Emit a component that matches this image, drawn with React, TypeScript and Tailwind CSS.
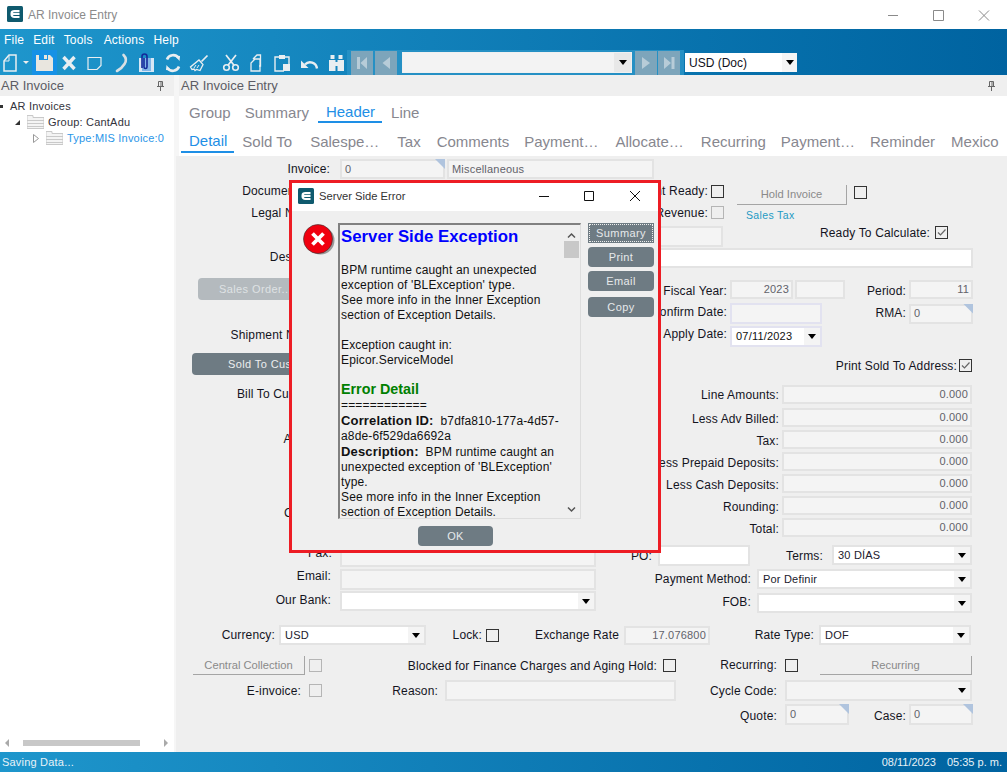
import React from "react";

type P = { c?: string; children?: React.ReactNode };

const L = ({ c = "", children }: P) => (
  <div className={`flex shrink-0 justify-end whitespace-nowrap text-[12px] leading-[14px] tracking-[0.15px] text-[#14141e] ${c}`}>{children}</div>
);

const Corner = () => (
  <div className="absolute right-[-2px] top-[-2px] h-[10px] w-[10px] bg-[#b0c4de] [clip-path:polygon(0_0,100%_0,100%_100%)]" />
);

const F = ({ c = "", t, right, corner, white }: { c?: string; t?: string; right?: boolean; corner?: boolean; white?: boolean }) => (
  <div
    className={`relative flex shrink-0 items-center border-2 border-[#e3e3e3] text-[11px] tracking-[0.2px] text-[#62626a] ${white ? "bg-white" : "bg-[#f4f4f4]"} ${right ? "justify-end pr-[2px]" : "pl-[3px]"} ${c}`}
  >
    {t}
    {corner && <Corner />}
  </div>
);

const Caret = () => <div className="h-0 w-0 border-x-[4px] border-t-[5px] border-x-transparent border-t-black" />;

const Combo = ({ c = "", t, dis }: { c?: string; t?: string; dis?: boolean }) => (
  <div className={`flex shrink-0 border-2 border-[#e3e3e3] text-[11px] tracking-[0.2px] text-[#20202c] ${dis ? "bg-[#f4f4f4]" : "bg-white"} ${c}`}>
    <div className="flex flex-1 items-center pl-[4px]">{t}</div>
    <div className="flex w-[16px] items-center justify-center bg-[#f4f4f4]">
      <Caret />
    </div>
  </div>
);

const Chk = ({ dis, on, c = "" }: { dis?: boolean; on?: boolean; c?: string }) => (
  <div className={`flex h-[13px] w-[13px] shrink-0 items-center justify-center border ${dis ? "border-[#b5b5b5]" : "border-[#333]"} ${c}`}>
    {on && (
      <svg width="11" height="11" viewBox="0 0 11 11" fill="none">
        <path d="M2 5.500l2.500 2.500L9.500 2.500" stroke="#666" strokeWidth="1.2" />
      </svg>
    )}
  </div>
);

const FlatBtn = ({ c = "", t }: { c?: string; t: string }) => (
  <div className={`flex shrink-0 items-center justify-center border-b border-r border-[#a5a5a5] text-[11.2px] text-[#8a8a8a] ${c}`}>{t}</div>
);

const Logo = ({ c = "" }: { c?: string }) => (
  <svg className={c} viewBox="0 0 16 16">
    <rect width="16" height="16" rx="1.500" fill="#0f5a6e" />
    <path d="M3.500 7.400C3.500 5 5 4 7.500 4H12.500V6.200H7.500C6.400 6.200 6 6.500 5.900 7H12.500V9.100H5.900C6 9.700 6.500 10 7.500 10H12.500V12H7.500C5 12 3.500 10.800 3.500 8.500Z" fill="#fff" />
  </svg>
);

const Pin = ({ c = "" }: { c?: string }) => (
  <svg className={c} width="9" height="10" viewBox="0 0 9 10" fill="none">
    <path d="M2.500 .5h4v5h-4zM1 5.500h7M4.500 5.500V10" stroke="#666" />
    <path d="M5 1v4" stroke="#666" />
  </svg>
);

const Ico = ({ c = "", children, w = 20 }: P & { w?: number }) => (
  <svg className={`shrink-0 ${c}`} width={w} height="20" viewBox={`0 0 ${w} 20`} fill="none" stroke="#e9eef1" strokeWidth="1.5">
    {children}
  </svg>
);

const Folder = ({ c = "" }: { c?: string }) => (
  <svg className={`shrink-0 ${c}`} width="17" height="14" viewBox="0 0 17 14">
    <path d="M0 0.500h6v2h11v11H0z" fill="#f4f4f4" stroke="#c9c9c9" />
    <path d="M0 5.500h17M0 8.500h17M0 11.500h17" stroke="#c9c9c9" />
  </svg>
);

const Tab = ({ c = "", t, on }: { c?: string; t: string; on?: boolean }) => (
  <div className={`relative shrink-0 whitespace-nowrap text-[15px] leading-[18px] ${on ? "text-[#1e8fe6]" : "text-[#87878f]"} ${c}`}>{t}</div>
);

const MBtn = ({ c = "", t, focus }: { c?: string; t: string; focus?: boolean }) => (
  <div className={`flex h-[20px] w-[66px] items-center justify-center bg-[#6e7b83] text-[11px] tracking-[0.4px] text-[#e6e9eb] ${focus ? "border-2 border-[#6e7b83] outline-1 outline-dotted -outline-offset-2 outline-[#eee]" : "rounded-[4px]"} ${c}`}>{t}</div>
);

const NavBtn = ({ c = "", d }: { c?: string; d: string }) => (
  <div className={`flex h-[24px] w-[22px] shrink-0 items-center justify-center bg-[#7da5bb] ${c}`}>
    <svg width="14" height="16" viewBox="0 0 14 16">
      <path d={d} fill="#b7ccd8" />
    </svg>
  </div>
);

export default function App() {
  return (
    <div className="relative flex h-[772px] w-[1007px] flex-col overflow-hidden bg-white font-['Liberation_Sans',Arial,sans-serif]">
      {/* Title bar */}
      <div className="flex h-[29px] shrink-0 items-center">
        <Logo c="ml-[7px] mt-[-1px] h-[16px] w-[16px]" />
        <div className="ml-[5px] text-[12px] text-[#8b8b8b]">AR Invoice Entry</div>
        <svg className="ml-auto mr-[17px]" width="102" height="12" viewBox="0 0 102 12" fill="none" stroke="#8a8a8a">
          <path d="M0 6.500h10M45.500 1.500h10v10h-10zM91 1.500l10 10M101 1.500l-10 10" />
        </svg>
      </div>

      {/* Menu and toolbar */}
      <div className="h-[46px] shrink-0 bg-gradient-to-r from-[#1e96cc] to-[#0063a0]">
        <div className="flex h-[21px] items-center pl-[4px] text-[12px] tracking-[0.2px] text-white">
          <span>File</span>
          <span className="ml-[9px]">Edit</span>
          <span className="ml-[9px]">Tools</span>
          <span className="ml-[11px]">Actions</span>
          <span className="ml-[9px]">Help</span>
        </div>
        <div className="flex h-[25px] items-center">
          <Ico c="ml-[3px]" w={14}>
            <path d="M1 8l5-6h7v16H1z" />
            <path d="M1 8h5V2" strokeWidth="1" />
          </Ico>
          <div className="ml-[6px] h-0 w-0 border-x-[3px] border-t-[3px] border-x-transparent border-t-[#eee]" />
          <div className="ml-[3px] flex h-[26px] w-[25px] items-center justify-center bg-[#1691e6]">
            <svg width="19" height="18" viewBox="0 0 19 18">
              <path d="M1 1h3v5h9V1h2l3 3v13H1z" fill="#e9e6df" />
              <rect x="9" y="1" width="3" height="4" fill="#e9e6df" />
            </svg>
          </div>
          <Ico c="ml-[4px]" w={16}>
            <path d="M2.500 4l11 12M13.500 4l-11 12" strokeWidth="3.400" />
          </Ico>
          <Ico c="ml-[7px]" w={20}>
            <path d="M4 4.500h13v8l-4 4H4z" strokeWidth="1.200" />
          </Ico>
          <Ico c="ml-[7px]" w={20}>
            <path d="M12.500 2c2.500 2.500 3 6 1 9-1.500 2.500-4 5-7.500 7" strokeWidth="2.600" strokeLinecap="round" stroke="#d8dfe3" />
          </Ico>
          <svg className="ml-[7px] shrink-0" width="17" height="21" viewBox="0 0 17 21" fill="none">
            <rect x="1" y="6" width="15" height="14" fill="#d7e7f5" />
            <rect x="4" y="6" width="9" height="13" fill="#2c86d9" opacity=".5" />
            <path d="M4 16V4.500a2.500 2.500 0 015 0V15a1.500 1.500 0 01-3 0V6" stroke="#142a9a" strokeWidth="1.600" />
          </svg>
          <Ico c="ml-[8px]" w={20}>
            <path d="M15.500 5A6.500 6.500 0 004 6.500M4.500 15a6.500 6.500 0 0011.500-1.500" strokeWidth="2.600" />
            <path d="M12 2.500l5 .5-.5 5zM8 17.500l-5-.5.5-5z" fill="#e9eef1" stroke="none" />
          </Ico>
          <Ico c="ml-[6px]" w={20}>
            <path d="M18.500 2.500l-6 6" strokeWidth="1.700" />
            <path d="M10 7l4 4.500-3 6-3.500-1-1.500 1-1-1.500-2 .5-1.500-2.500z" strokeWidth="1.300" />
            <path d="M7 12l-2 3M10 12l-2 3" strokeWidth="1" />
          </Ico>
          <Ico c="ml-[13px]" w={18}>
            <circle cx="4.500" cy="14.500" r="2.800" strokeWidth="1.600" />
            <circle cx="13.500" cy="14.500" r="2.800" strokeWidth="1.600" />
            <path d="M6 12.200L14 2M12 12.200L4 2" strokeWidth="1.700" />
          </Ico>
          <Ico c="ml-[6px]" w={20}>
            <path d="M7 6l4-4h3.500v11H13M5 18V10l4-4h5v12z" strokeWidth="1.300" />
          </Ico>
          <Ico c="ml-[6px]" w={20}>
            <path d="M12 18H3V4h4M13 4h4v7" strokeWidth="1.400" />
            <rect x="7" y="2" width="6" height="4" fill="#e9eef1" stroke="none" />
            <rect x="11" y="11" width="7" height="7" fill="#e9eef1" stroke="none" />
          </Ico>
          <Ico c="ml-[7px]" w={20}>
            <path d="M18 15.500a7 7 0 00-12-4" strokeWidth="2.400" />
            <path d="M2 7.500V15h7.500z" fill="#e9eef1" stroke="none" />
          </Ico>
          <svg className="ml-[9px] shrink-0" width="17" height="18" viewBox="0 0 17 18">
            <path d="M2.500 1h4v4h-4zM10.500 1h4v4h-4zM1 6h6.500v11H1zM9.500 6H16v11H9.500zM7.500 8h2v4h-2z" fill="#e9eef1" />
          </svg>
          <div className="ml-[2px] flex h-[25px] flex-1 items-center">
            <div className="flex h-[25px] items-center bg-[#2590c4] pl-[4px] pr-[4px]">
              <NavBtn d="M2 2h3v12H2zM12 2v12L5.500 8z" />
              <NavBtn c="ml-[2px]" d="M11 2v12L3.500 8z" />
              <div className="ml-[5px] flex h-[21px] w-[230px] border border-[#f0f0f0] bg-[#f3f3f3]">
                <div className="flex-1" />
                <div className="flex w-[17px] items-center justify-center bg-[#e8e8e8]">
                  <Caret />
                </div>
              </div>
              <NavBtn c="ml-[3px]" d="M3 2v12L11 8z" />
              <NavBtn c="ml-[1px]" d="M2 2v12L9 8zM9.500 2h3v12h-3z" />
            </div>
            <div className="ml-[1px] flex h-[19px] w-[112px] bg-white text-[12px] text-[#101020]">
              <div className="flex flex-1 items-center pl-[4px]">USD (Doc)</div>
              <div className="flex w-[15px] items-center justify-center bg-[#f5f5f5]">
                <Caret />
              </div>
            </div>
          </div>
        </div>
      </div>

      {/* Main */}
      <div className="flex min-h-0 flex-1">
        {/* Tree panel */}
        <div className="flex w-[174px] shrink-0 flex-col">
          <div className="flex h-[21px] shrink-0 items-center bg-[#efefef] pl-[1px] text-[13px] text-[#5c5c64]">
            AR Invoice
            <Pin c="ml-auto mr-[9px]" />
          </div>
          <div className="flex-1 text-[11px] tracking-[0.2px] text-[#33333c]">
            <div className="mt-[2px] flex h-[16px] items-center">
              <div className="h-[3px] w-[3px] bg-[#333]" />
              <span className="ml-[7px]">AR Invoices</span>
            </div>
            <div className="flex h-[16px] items-center">
              <div className="ml-[15px] h-0 w-0 border-b-[5px] border-l-[5px] border-b-[#333] border-l-transparent" />
              <Folder c="ml-[7px]" />
              <span className="ml-[4px]">Group: CantAdu</span>
            </div>
            <div className="flex h-[16px] items-center">
              <svg className="ml-[33px] shrink-0" width="6" height="9" viewBox="0 0 6 9">
                <path d="M.5.5l5 4-5 4z" fill="#fff" stroke="#999" />
              </svg>
              <Folder c="ml-[7px]" />
              <span className="ml-[4px] text-[#2a96e8]">Type:MIS Invoice:0</span>
            </div>
          </div>
          <div className="flex h-[18px] shrink-0 items-center pl-[5px]">
            <div className="h-0 w-0 border-y-[4px] border-r-[4px] border-y-transparent border-r-[#aaa]" />
            <div className="ml-[14px] h-[6px] w-[117px] bg-[#c8c8c8]" />
            <div className="ml-[24px] h-0 w-0 border-y-[4px] border-l-[4px] border-y-transparent border-l-[#aaa]" />
          </div>
        </div>
        <div className="w-[5px] shrink-0 bg-[#f6f6f6]" />

        {/* Right panel */}
        <div className="flex min-w-0 flex-1 flex-col">
          <div className="flex h-[21px] shrink-0 items-center bg-[#efefef] pl-[2px] text-[13px] text-[#5c5c64]">
            AR Invoice Entry
            <Pin c="ml-auto mr-[11px]" />
          </div>
          <div className="h-[60px] shrink-0 bg-white">
            <div className="flex h-[29px] items-end pb-[3px] pl-[10px]">
              <Tab t="Group" />
              <Tab c="ml-[14px]" t="Summary" />
              <Tab c="ml-[17px] top-[-1px] after:absolute after:-left-[8px] after:-right-[7px] after:top-[18px] after:h-[2px] after:bg-[#1e8fe6]" t="Header" on />
              <Tab c="ml-[16px]" t="Line" />
            </div>
            <div className="flex h-[31px] items-start pt-[8px] pl-[10px]">
              <Tab c="top-[-1px] after:absolute after:-left-[8px] after:-right-[7px] after:top-[19px] after:h-[2px] after:bg-[#1e8fe6]" t="Detail" on />
              <Tab c="ml-[15px]" t="Sold To" />
              <Tab c="ml-[18px]" t="Salespe…" />
              <Tab c="ml-[18px]" t="Tax" />
              <Tab c="ml-[16px]" t="Comments" />
              <Tab c="ml-[15px]" t="Payment…" />
              <Tab c="ml-[17px]" t="Allocate…" />
              <Tab c="ml-[17px]" t="Recurring" />
              <Tab c="ml-[15px]" t="Payment…" />
              <Tab c="ml-[15px]" t="Reminder" />
              <Tab c="ml-[16px]" t="Mexico" />
            </div>
          </div>

          {/* Form */}
          <div className="ml-[-3px] flex-1 bg-[#efefef] pt-[3px]">
            <div className="flex h-[386px]">
              <div className="w-[480px] shrink-0">
                <div className="flex h-[20px] items-center">
                  <L c="w-[154px]">Invoice:</L>
                  <F c="ml-[10px] h-[20px] w-[105px]" t="0" corner />
                  <F c="ml-[2px] h-[20px] w-[207px]" t="Miscellaneous" />
                </div>
                <div className="mt-[2px] flex h-[20px] items-center">
                  <L c="w-[155px]">Document Date:</L>
                </div>
                <div className="mt-[2px] flex h-[20px] items-center">
                  <L c="w-[156px]">Legal Number:</L>
                </div>
                <div className="mt-[24px] flex h-[20px] items-center">
                  <L c="w-[159px]">Description:</L>
                </div>
                <div className="ml-[22px] mt-[11px] flex h-[22px] w-[120px] items-center rounded-[4px] bg-[#b4babe] pl-[21px] text-[11px] tracking-[0.4px] text-[#dfe2e4]">
                  Sales Order...
                </div>
                <div className="mt-[25px] flex h-[20px] items-center">
                  <L c="w-[157px]">Shipment Number:</L>
                </div>
                <div className="ml-[16px] mt-[8px] flex h-[22px] w-[150px] items-center rounded-[4px] bg-[#6e7b83] pl-[36px] text-[11px] tracking-[0.4px] text-[#eceeef]">
                  Sold To Customer
                </div>
                <div className="mt-[9px] flex h-[20px] items-center">
                  <L c="w-[154px]">Bill To Customer:</L>
                </div>
                <div className="mt-[25px] flex h-[20px] items-center">
                  <L c="w-[156px]">Address:</L>
                </div>
                <div className="mt-[54px] flex h-[20px] items-center">
                  <L c="w-[154px]">Contact:</L>
                </div>
              </div>

              <div className="flex-1">
                <div className="mt-[26px] flex h-[20px] items-center">
                  <L c="w-[52px] mt-[-8px]">Print Ready:</L>
                  <Chk c="ml-[3px] mt-[-7px]" />
                  <FlatBtn c="ml-[13px] h-[20px] w-[110px] pb-[1px]" t="Hold Invoice" />
                  <Chk c="ml-[7px] mt-[-6px]" />
                </div>
                <div className="flex h-[20px] items-center">
                  <L c="w-[52px] mt-[-4px]">Deferred Revenue:</L>
                  <Chk dis c="ml-[3px] mt-[-6px]" />
                  <div className="ml-[22px] mt-[1px] text-[10.5px] tracking-[0.35px] text-[#1d9ac4]">Sales Tax</div>
                </div>
                <div className="mt-[1px] flex h-[21px] items-start">
                  <F c="h-[21px] w-[67px]" />
                  <L c="w-[207px]">Ready To Calculate:</L>
                  <Chk on c="ml-[5px]" />
                </div>
                <F white c="mt-[1px] h-[20px] w-[317px]" />
                <div className="mt-[12px] flex h-[20px] items-start">
                  <L c="w-[71px] mt-[4px]">Fiscal Year:</L>
                  <F c="ml-[3px] h-[19px] w-[63px]" t="2023" right />
                  <F c="ml-[2px] h-[19px] w-[50px]" />
                  <L c="w-[61px] mt-[4px]">Period:</L>
                  <F c="ml-[3px] h-[19px] w-[64px]" t="11" right />
                </div>
                <div className="mt-[3px] flex h-[21px] items-center">
                  <L c="w-[71px] mt-[-4px]">Confirm Date:</L>
                  <F c="ml-[3px] h-[21px] w-[92px] !border-[#e2e2f0]" />
                  <L c="w-[84px] mt-[-2px]">RMA:</L>
                  <F c="ml-[3px] h-[20px] w-[64px]" t="0" corner />
                </div>
                <div className="mt-[2px] flex h-[21px] items-center">
                  <L c="w-[71px] mt-[-6px]">Apply Date:</L>
                  <Combo c="ml-[3px] h-[21px] w-[92px] !border-[#e2e2f0] !text-[#111]" t="07/11/2023" />
                </div>
                <div className="mt-[12px] flex h-[13px] items-center">
                  <L c="w-[301px]">Print Sold To Address:</L>
                  <Chk on c="ml-[2px]" />
                </div>
                {[
                  ["Line Amounts:", "mt-[13px]", ""],
                  ["Less Adv Billed:", "mt-[4px]", "mt-[2px]"],
                  ["Tax:", "mt-[3px]", "mt-[3px]"],
                  ["Less Prepaid Deposits:", "mt-[3px]", "mt-[2px]"],
                  ["Less Cash Deposits:", "mt-[3px]", "mt-[2px]"],
                  ["Rounding:", "mt-[3px]", "mt-[3px]"],
                  ["Total:", "mt-[3px]", "mt-[2px]"],
                ].map(([t, m, lm]) => (
                  <div key={t} className={`flex h-[19px] items-center ${m}`}>
                    <L c={`w-[123px] ${lm}`}>{t}</L>
                    <F c="ml-[3px] h-[19px] w-[190px]" t="0.000" right />
                  </div>
                ))}
              </div>
            </div>

            <div className="flex h-[22px] items-start">
              <L c="w-[156px] mt-[1px]">Fax:</L>
              <F c="ml-[8px] h-[22px] w-[256px]" />
              <L c="w-[56px] mt-[4px]">PO:</L>
              <F white c="ml-[6px] h-[21px] w-[92px]" />
              <L c="w-[73px] mt-[4px]">Terms:</L>
              <Combo c="ml-[9px] h-[20px] w-[140px]" t="30 DÍAS" />
            </div>
            <div className="mt-[2px] flex h-[21px] items-start">
              <L c="w-[155px]">Email:</L>
              <F c="ml-[9px] h-[21px] w-[256px]" />
              <L c="w-[155px] mt-[3px]">Payment Method:</L>
              <Combo c="ml-[6px] h-[20px] w-[215px]" t="Por Definir" />
            </div>
            <div className="mt-[1px] flex h-[22px] items-start">
              <L c="w-[155px] mt-[2px]">Our Bank:</L>
              <Combo c="ml-[9px] h-[20px] w-[256px]" />
              <L c="w-[155px] mt-[4px]">FOB:</L>
              <Combo c="ml-[6px] mt-[2px] h-[20px] w-[215px]" />
            </div>

            <div className="mt-[12px] flex h-[20px] items-center">
              <L c="w-[99px]">Currency:</L>
              <Combo c="ml-[4px] h-[20px] w-[147px]" t="USD" />
              <L c="w-[56px]">Lock:</L>
              <Chk c="ml-[4px]" />
              <L c="w-[120px]">Exchange Rate</L>
              <F c="ml-[5px] h-[19px] w-[86px]" t="17.076800" right />
              <L c="w-[104px]">Rate Type:</L>
              <Combo c="ml-[5px] h-[20px] w-[152px]" t="DOF" />
            </div>
            <div className="mt-[11px] flex h-[19px] items-center">
              <FlatBtn c="ml-[17px] h-[19px] w-[112px] pt-[1px]" t="Central Collection" />
              <Chk dis c="ml-[4px]" />
              <L c="w-[335px]">Blocked for Finance Charges and Aging Hold:</L>
              <Chk c="ml-[6px]" />
              <L c="w-[101px] mt-[-1px]">Recurring:</L>
              <Chk c="ml-[8px]" />
              <FlatBtn c="ml-[22px] h-[19px] w-[152px] pt-[1px]" t="Recurring" />
            </div>
            <div className="mt-[5px] flex h-[21px] items-center">
              <L c="w-[125px]">E-invoice:</L>
              <Chk dis c="ml-[8px]" />
              <L c="w-[116px]">Reason:</L>
              <F c="ml-[7px] h-[21px] w-[231px]" />
              <L c="w-[101px]">Cycle Code:</L>
              <Combo dis c="ml-[8px] h-[21px] w-[187px]" />
            </div>
            <div className="mt-[3px] flex h-[21px] items-center">
              <L c="w-[601px] mt-[2px]">Quote:</L>
              <F c="ml-[8px] h-[21px] w-[64px]" t="0" corner />
              <L c="w-[57px] mt-[2px]">Case:</L>
              <F c="ml-[3px] h-[21px] w-[64px]" t="0" corner />
            </div>
          </div>
        </div>
      </div>

      {/* Status bar */}
      <div className="flex h-[20px] shrink-0 items-center bg-gradient-to-r from-[#1e96cc] to-[#0063a0] pl-[2px] pr-[5px] text-[11px] text-[#e8f2f8]">
        <span className="tracking-[0.2px]">Saving Data...</span>
        <span className="ml-auto">08/11/2023</span>
        <span className="ml-[11px]">05:35 p. m.</span>
      </div>

      {/* Modal */}
      <div className="absolute left-[289px] top-[180px] flex h-[373px] w-[372px] flex-col border-[3px] border-[#ed1c24] bg-[#efefef]">
        <div className="flex h-[28px] shrink-0 items-center bg-white pb-[2px]">
          <Logo c="ml-[6px] h-[16px] w-[16px]" />
          <div className="ml-[5px] text-[11.2px] text-[#333]">Server Side Error</div>
          <svg className="ml-auto mr-[18px]" width="101" height="12" viewBox="0 0 101 12" fill="none" stroke="#111">
            <path d="M0 6.500h10M45.500 1.500h9v9h-9zM91 1l10 10M101 1L91 11" />
          </svg>
        </div>
        <div className="flex flex-1 pl-[10px] pt-[12px]">
          <svg className="mt-[1px] shrink-0" width="34" height="32" viewBox="0 0 34 32">
            <circle cx="18.500" cy="16.500" r="14" fill="#9a9a9a" />
            <circle cx="16" cy="15" r="14.500" fill="#f0000f" stroke="#333" strokeWidth=".6" />
            <path d="M10.500 9.500l11 11M21.500 9.500l-11 11" stroke="#fff" strokeWidth="3.800" />
          </svg>
          <div className="ml-[2px] flex h-[296px] w-[243px] shrink-0 border-b border-l-2 border-r border-t-2 border-b-[#ddd] border-l-[#808080] border-r-[#ddd] border-t-[#808080]">
            <div className="h-full flex-1 overflow-hidden pl-[1px] text-[12px] leading-[15px] tracking-[0.15px] text-[#111]">
              <div className="mt-[1px] whitespace-nowrap text-[16.8px] font-bold leading-[21px] tracking-normal text-[#0000ff]">Server Side Exception</div>
              <div className="mt-[16px] whitespace-nowrap">
                BPM runtime caught an unexpected<br />
                exception of 'BLException' type.<br />
                See more info in the Inner Exception<br />
                section of Exception Details.<br />
                <br />
                Exception caught in:<br />
                Epicor.ServiceModel
              </div>
              <div className="mt-[12px] whitespace-nowrap text-[14.3px] font-bold leading-[18px] tracking-normal text-[#008000]">Error Detail</div>
              <div className="whitespace-nowrap">============</div>
              <div className="whitespace-nowrap">
                <b className="text-[13px]">Correlation ID:</b>&nbsp; b7dfa810-177a-4d57-<br />
                a8de-6f529da6692a<br />
                <b className="text-[13px]">Description:</b>&nbsp; BPM runtime caught an<br />
                unexpected exception of 'BLException'<br />
                type.<br />
                See more info in the Inner Exception<br />
                section of Exception Details.
              </div>
            </div>
            <div className="flex w-[17px] shrink-0 flex-col items-center">
              <svg className="mt-[7px]" width="9" height="7" viewBox="0 0 9 7" fill="none">
                <path d="M1 5.500l3.500-3.500L8 5.500" stroke="#555" strokeWidth="1.500" />
              </svg>
              <div className="mt-[2px] h-[17px] w-[15px] bg-[#c8c8c8]" />
              <svg className="mt-auto mb-[5px]" width="9" height="7" viewBox="0 0 9 7" fill="none">
                <path d="M1 1.500L4.500 5 8 1.500" stroke="#555" strokeWidth="1.500" />
              </svg>
            </div>
          </div>
          <div className="ml-[7px] shrink-0">
            <MBtn t="Summary" focus />
            <MBtn c="mt-[4px]" t="Print" />
            <MBtn c="mt-[4px]" t="Email" />
            <MBtn c="mt-[6px]" t="Copy" />
          </div>
        </div>
        <div className="mb-[4px] ml-[126px] flex h-[20px] w-[75px] shrink-0 items-center justify-center rounded-[4px] bg-[#6e7b83] text-[11px] tracking-[0.4px] text-[#e6e9eb]">OK</div>
      </div>
    </div>
  );
}
